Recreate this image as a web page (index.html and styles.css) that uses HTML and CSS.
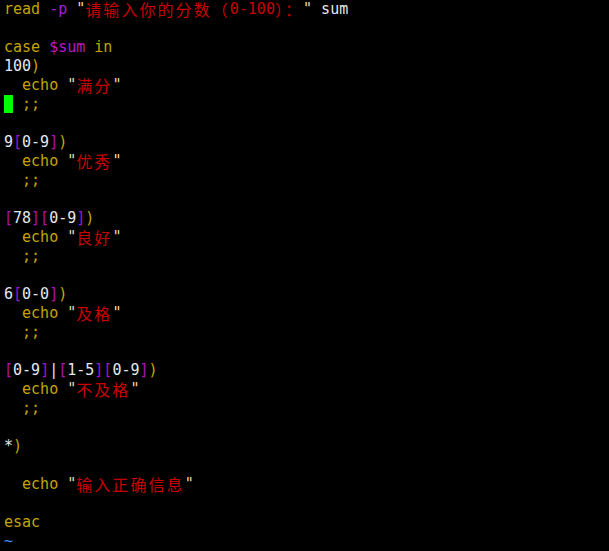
FILE: index.html
```html
<!DOCTYPE html>
<html lang="zh-CN">
<head>
  <meta charset="UTF-8" />
  <title>score.sh - vim</title>
  <link rel="stylesheet" href="styles.css">
</head>
<body>
<pre class="term"><span class="kw">read</span> <span class="op">-p</span> <span class="q">"</span><span class="str cjk">请输入你的分数（</span><span class="str">0-100</span><span class="str cjk">）：</span><span class="q">"</span> sum

<span class="kw">case</span> <span class="var">$sum</span> <span class="kw">in</span>
100<span class="kw">)</span>
  <span class="kw">echo</span> <span class="q">"</span><span class="str cjk">满分</span><span class="q">"</span>
<span class="cursor"> </span> <span class="kw">;;</span>

9<span class="br">[</span>0-9<span class="br">]</span><span class="kw">)</span>
  <span class="kw">echo</span> <span class="q">"</span><span class="str cjk">优秀</span><span class="q">"</span>
  <span class="kw">;;</span>

<span class="br">[</span>78<span class="br">][</span>0-9<span class="br">]</span><span class="kw">)</span>
  <span class="kw">echo</span> <span class="q">"</span><span class="str cjk">良好</span><span class="q">"</span>
  <span class="kw">;;</span>

6<span class="br">[</span>0-0<span class="br">]</span><span class="kw">)</span>
  <span class="kw">echo</span> <span class="q">"</span><span class="str cjk">及格</span><span class="q">"</span>
  <span class="kw">;;</span>

<span class="br">[</span>0-9<span class="br">]</span>|<span class="br">[</span>1-5<span class="br">][</span>0-9<span class="br">]</span><span class="kw">)</span>
  <span class="kw">echo</span> <span class="q">"</span><span class="str cjk">不及格</span><span class="q">"</span>
  <span class="kw">;;</span>

*<span class="kw">)</span>

  <span class="kw">echo</span> <span class="q">"</span><span class="str cjk">输入正确信息</span><span class="q">"</span>

<span class="kw">esac</span>
<span class="tilde">~</span></pre>
</body>
</html>
```

FILE: styles.css
```css
html, body {
  margin: 0;
  background-color: #000;
  height: 100%;
}
.term {
  margin: 0;
  padding: 0 0 0 4px;
  font-family: "DejaVu Sans Mono", "Liberation Mono", "Noto Sans CJK SC", monospace;
  font-size: 15px;
  line-height: 19px;
  color: #e2e8f0;
}
.kw { color: #c4a500; }
.op { color: #a020d8; }
.var { color: #b818c8; }
.br { color: #a810c0; }
.q { color: #e8d8a8; }
.str { color: #c80000; }
.cjk {
  display: inline-block;
  height: 19px;
  vertical-align: top;
  font-family: "Noto Sans CJK SC", sans-serif;
  font-size: 16px;
  line-height: 19px;
  letter-spacing: 2.06px;
}
.cursor {
  display: inline-block;
  width: 9px;
  height: 18px;
  vertical-align: top;
  background-color: #00ff00;
}
.tilde { color: #3c8cff; }
```
